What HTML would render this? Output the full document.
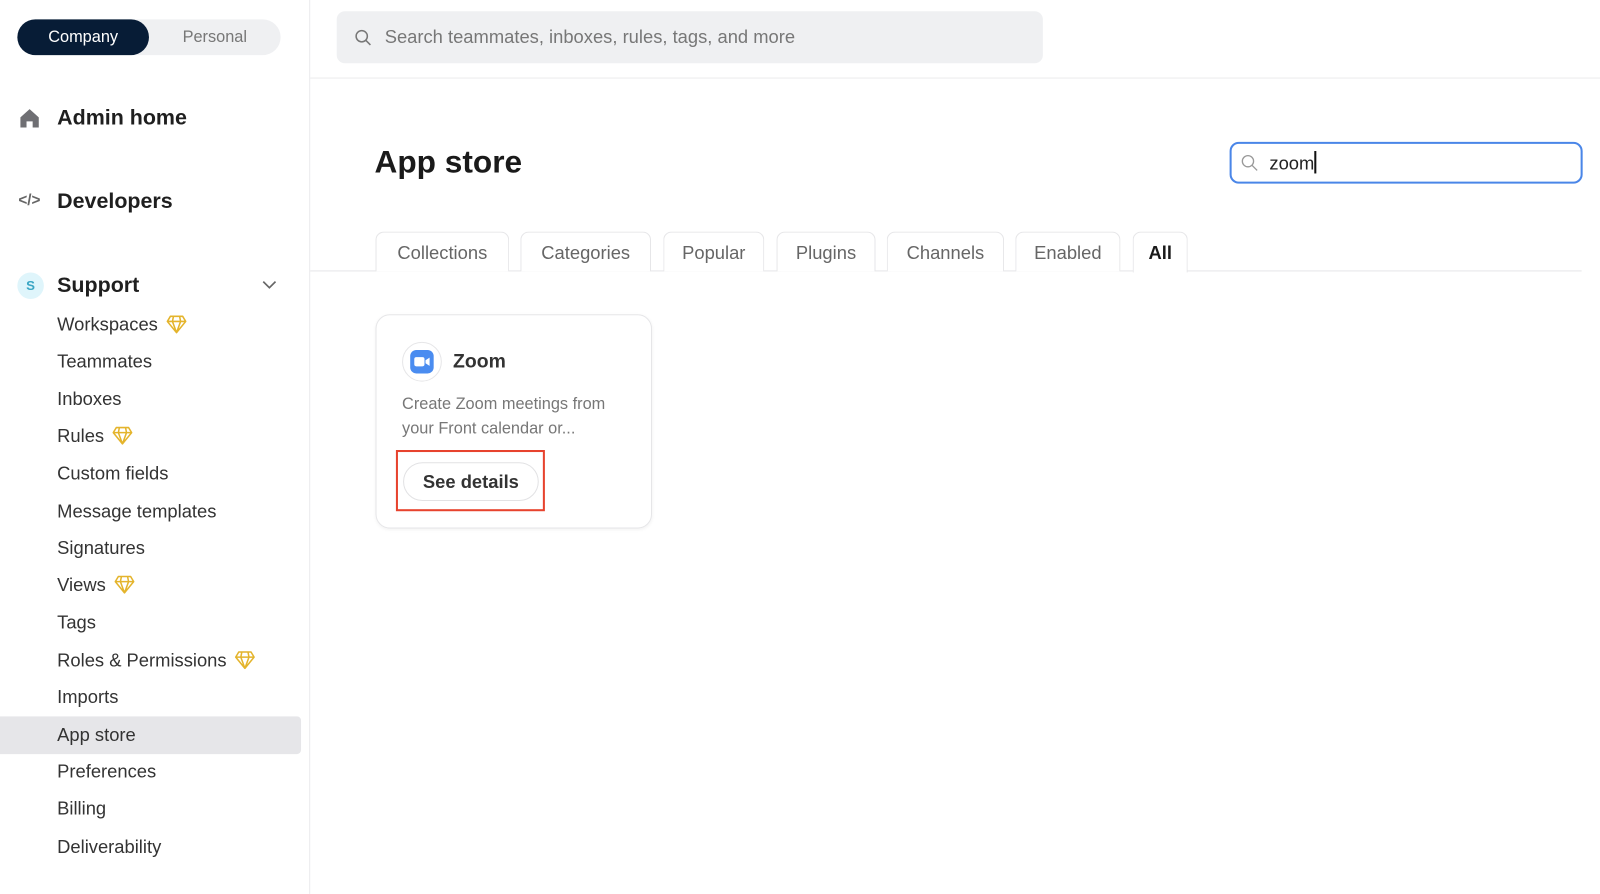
<!DOCTYPE html><html><head><style>
*{box-sizing:border-box;margin:0;padding:0}
body{width:1600px;height:876px;overflow:hidden;background:#fff;font-family:"Liberation Sans",sans-serif;color:#1f1f1f;position:relative}
#w{position:absolute;left:0;top:0;width:1568px;height:859px;transform:scale(1.02041);transform-origin:0 0}
.a{position:absolute}
.side{left:0;top:0;width:304px;height:876px;border-right:1px solid #ebebed}
.tog{left:17px;top:19px;width:258px;height:35px;border-radius:18px;background:#eff0f2}
.tog .c{position:absolute;left:0;top:0;width:129px;height:35px;border-radius:18px;background:#071c36;color:#fff;font-size:16px;text-align:center;line-height:35px}
.tog .p{position:absolute;left:129px;top:0;width:129px;line-height:35px;text-align:center;color:#777;font-size:16px}
.h{font-size:21px;font-weight:bold;left:56px}
.it{left:56px;font-size:18px;color:#333;line-height:22px}
.gem{display:inline-block;vertical-align:-3px;margin-left:8px}
.tab{top:227px;height:39px;border:1px solid #e6e6e8;border-bottom:none;border-radius:8px 8px 0 0;font-size:18px;color:#666;text-align:center;line-height:40px;background:#fff}
</style></head><body><div id="w">
<div class="a side"></div>
<div class="a tog"><div class="c">Company</div><div class="p">Personal</div></div>
<svg class="a" style="left:19px;top:106px" width="20" height="20" viewBox="0 0 20 20"><path d="M10 1 L19 9 V19 H13 V13 H7 V19 H1 V9 Z" fill="#6f6f73" stroke-linejoin="round"/></svg>
<div class="a h" style="top:104px">Admin home</div>
<div class="a" style="left:18px;top:188px;font-size:15px;color:#666;font-weight:bold">&lt;/&gt;</div>
<div class="a h" style="top:186px">Developers</div>
<div class="a" style="left:17px;top:267px;width:26px;height:26px;border-radius:50%;background:#dff5fb;color:#3aa6c4;font-size:13px;font-weight:bold;text-align:center;line-height:26px">S</div>
<div class="a h" style="top:268px">Support</div>
<svg class="a" style="left:257px;top:274px" width="14" height="10"><path d="M1 2 L7 8 L13 2" fill="none" stroke="#666" stroke-width="1.6"/></svg>
<div class="a" style="left:0;top:702px;width:295px;height:37px;background:#e6e6e9;border-radius:0 4px 4px 0"></div>
<div class="a it" style="top:307px">Workspaces<svg class="gem" width="20" height="18" viewBox="0 0 20 18"><path d="M4 1H16L19 6L10 17L1 6Z M1 6H19 M7 1L6 6L10 17L14 6L13 1" fill="none" stroke="#e4b42c" stroke-width="1.5" stroke-linejoin="round"/></svg></div>
<div class="a it" style="top:343px">Teammates</div>
<div class="a it" style="top:380px">Inboxes</div>
<div class="a it" style="top:416px">Rules<svg class="gem" width="20" height="18" viewBox="0 0 20 18"><path d="M4 1H16L19 6L10 17L1 6Z M1 6H19 M7 1L6 6L10 17L14 6L13 1" fill="none" stroke="#e4b42c" stroke-width="1.5" stroke-linejoin="round"/></svg></div>
<div class="a it" style="top:453px">Custom fields</div>
<div class="a it" style="top:490px">Message templates</div>
<div class="a it" style="top:526px">Signatures</div>
<div class="a it" style="top:562px">Views<svg class="gem" width="20" height="18" viewBox="0 0 20 18"><path d="M4 1H16L19 6L10 17L1 6Z M1 6H19 M7 1L6 6L10 17L14 6L13 1" fill="none" stroke="#e4b42c" stroke-width="1.5" stroke-linejoin="round"/></svg></div>
<div class="a it" style="top:599px">Tags</div>
<div class="a it" style="top:636px">Roles &amp; Permissions<svg class="gem" width="20" height="18" viewBox="0 0 20 18"><path d="M4 1H16L19 6L10 17L1 6Z M1 6H19 M7 1L6 6L10 17L14 6L13 1" fill="none" stroke="#e4b42c" stroke-width="1.5" stroke-linejoin="round"/></svg></div>
<div class="a it" style="top:672px">Imports</div>
<div class="a it" style="top:709px">App store</div>
<div class="a it" style="top:745px">Preferences</div>
<div class="a it" style="top:781px">Billing</div>
<div class="a it" style="top:819px">Deliverability</div>

<div class="a" style="left:304px;top:76px;width:1296px;height:1px;background:#ebebed"></div>
<div class="a" style="left:330px;top:11px;width:692px;height:51px;border-radius:8px;background:#eff0f2"></div>
<svg class="a" style="left:347px;top:28px" width="18" height="18"><circle cx="7.5" cy="7.5" r="5.5" fill="none" stroke="#777" stroke-width="1.5"/><path d="M11.5 11.5L16 16" stroke="#777" stroke-width="1.5"/></svg>
<div class="a" style="left:377px;top:26px;font-size:18px;color:#777">Search teammates, inboxes, rules, tags, and more</div>

<div class="a" style="left:367px;top:141px;font-size:31px;font-weight:bold;color:#1a1a1a">App store</div>
<div class="a" style="left:1205px;top:139px;width:346px;height:41px;border:2px solid #4a86e8;border-radius:9px"></div>
<svg class="a" style="left:1215px;top:150px" width="19" height="19"><circle cx="8" cy="8" r="5.5" fill="none" stroke="#999" stroke-width="1.3"/><path d="M12 12L17 17" stroke="#999" stroke-width="1.3"/></svg>
<div class="a" style="left:1244px;top:148px;font-size:18px;color:#222">zoom<span style="display:inline-block;width:2px;height:22px;background:#111;vertical-align:-4px"></span></div>

<div class="a" style="left:304px;top:265px;width:1246px;height:1px;background:#e6e6e8"></div>
<div class="a tab" style="left:368px;width:131px">Collections</div>
<div class="a tab" style="left:510px;width:128px">Categories</div>
<div class="a tab" style="left:650px;width:99px">Popular</div>
<div class="a tab" style="left:761px;width:97px">Plugins</div>
<div class="a tab" style="left:869px;width:115px">Channels</div>
<div class="a tab" style="left:995px;width:103px">Enabled</div>
<div class="a tab" style="left:1110px;width:54px;color:#1a1a1a;font-weight:bold;height:40px">All</div>

<div class="a" style="left:368px;top:308px;width:271px;height:210px;border:1px solid #e6e6e8;border-radius:14px;box-shadow:0 1px 3px rgba(0,0,0,.05)"></div>
<div class="a" style="left:394px;top:335px;width:39px;height:39px;border-radius:50%;border:1px solid #e6e6e8"></div>
<div class="a" style="left:402px;top:343px;width:23px;height:23px;border-radius:6px;background:#4a8cf0"></div>
<svg class="a" style="left:405px;top:349px" width="18" height="11"><rect x="1" y="1" width="10" height="9" rx="2" fill="#fff"/><path d="M12 4L16 1.5V9.5L12 7Z" fill="#fff"/></svg>
<div class="a" style="left:444px;top:344px;font-size:19px;font-weight:bold;color:#333">Zoom</div>
<div class="a" style="left:394px;top:385px;font-size:16px;color:#777;line-height:24px">Create Zoom meetings from<br>your Front calendar or...</div>
<div class="a" style="left:395px;top:453px;width:133px;height:38px;border:1px solid #e2e2e4;border-radius:19px;font-size:18px;font-weight:bold;color:#333;text-align:center;line-height:37px">See details</div>
<div class="a" style="left:388px;top:441px;width:146px;height:60px;border:2px solid #e7432e"></div>
</div></body></html>
